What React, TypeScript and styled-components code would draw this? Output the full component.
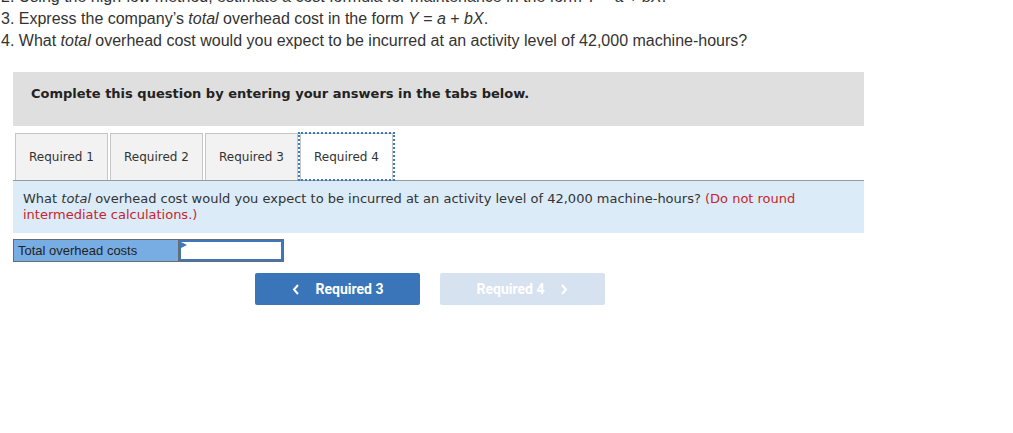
import React from "react";
import styled, { createGlobalStyle } from "styled-components";

const GlobalStyle = createGlobalStyle`
  html, body {
    margin: 0;
    padding: 0;
    background: #fff;
    overflow: hidden;
  }
`;

const Page = styled.div`
  width: 1013px;
  height: 433px;
  overflow: hidden;
  color: #333;
`;

const Intro = styled.div`
  margin-top: -14px;
  padding-left: 1px;
  font-family: "Liberation Sans", Arial, sans-serif;
  font-size: 16px;
  line-height: 22px;
  color: #333;
  p {
    margin: 0;
    white-space: nowrap;
  }
`;

const Main = styled.div`
  margin: 20px 0 0 13px;
  width: 851px;
  display: flex;
  flex-direction: column;
`;

const Banner = styled.div`
  height: 54px;
  box-sizing: border-box;
  background: #dfdfdf;
  padding: 14px 0 0 18px;
  font-family: "DejaVu Sans", Verdana, sans-serif;
  font-weight: bold;
  font-size: 13px;
  line-height: 16px;
  color: #222;
`;

const TabBar = styled.div`
  margin-top: 7px;
  display: flex;
  gap: 2px;
  padding-left: 2px;
  border-bottom: 1px solid #9a9a9a;
`;

const Tab = styled.div<{ $active?: boolean }>`
  position: relative;
  width: 93px;
  height: 47px;
  box-sizing: border-box;
  border: 1px solid #c6c6c6;
  border-bottom: none;
  background: ${(p) => (p.$active ? "#fff" : "#f2f2f2")};
  display: flex;
  align-items: center;
  justify-content: center;
  font-family: "DejaVu Sans", Verdana, sans-serif;
  font-size: 12px;
  color: #333;
  ${(p) =>
    p.$active &&
    `
    &::after {
      content: "";
      position: absolute;
      left: -3px;
      right: -3px;
      top: -2px;
      bottom: -1px;
      border: 2px dotted #3a78c2;
    }
  `}
`;

const Prompt = styled.div`
  background: #dbebf8;
  padding: 10px 60px 10px 10px;
  font-family: "DejaVu Sans", Verdana, sans-serif;
  font-size: 13px;
  line-height: 16px;
  color: #333;
  em {
    font-style: italic;
  }
`;

const Note = styled.span`
  color: #c6262e;
`;

const AnswerRow = styled.div`
  margin-top: 6px;
  display: flex;
  height: 23px;
`;

const Label = styled.div`
  width: 165px;
  box-sizing: border-box;
  border: 1px solid #6b6b6b;
  border-right: none;
  background: #78ade3;
  display: flex;
  align-items: center;
  padding-left: 4px;
  font-family: "Liberation Sans", Arial, sans-serif;
  font-size: 13px;
  color: #222;
`;

const InputCell = styled.div`
  position: relative;
  width: 106px;
  box-sizing: border-box;
  border: 1px solid #6b6b6b;
  padding: 0;
  display: flex;
`;

const Input = styled.input`
  flex: 1;
  margin: 0;
  border: 2px solid #3e76b9;
  outline: none;
  background: #fff;
  box-sizing: border-box;
  width: 100%;
  height: 100%;
  padding: 0 4px;
`;

const Marker = styled.span`
  position: absolute;
  left: 2px;
  top: 2px;
  width: 0;
  height: 0;
  border-top: 3px solid transparent;
  border-bottom: 3px solid transparent;
  border-left: 6px solid #3e76b9;
`;

const NavRow = styled.div`
  margin: 11px 0 0 242px;
  display: flex;
  gap: 20px;
`;

const NavButton = styled.button<{ $disabled?: boolean }>`
  width: 165px;
  height: 32px;
  border: none;
  border-radius: 2px;
  background: ${(p) => (p.$disabled ? "#d7e2f0" : "#3a75b9")};
  color: #fff;
  font-family: Roboto, "Liberation Sans", sans-serif;
  font-weight: bold;
  font-size: 14px;
  display: flex;
  align-items: center;
  justify-content: center;
  gap: 16px;
  padding: 0;
  cursor: pointer;
`;

const Chevron = ({ dir }: { dir: "left" | "right" }) => (
  <svg width="8" height="11" viewBox="0 0 8 11">
    <path
      d={dir === "left" ? "M6 1 L2 5.5 L6 10" : "M2 1 L6 5.5 L2 10"}
      fill="none"
      stroke="#fff"
      strokeWidth="2"
    />
  </svg>
);

const App: React.FC = () => {
  return (
    <Page>
      <GlobalStyle />
      <Intro>
        <p>
          2. Using the high-low method, estimate a cost formula for maintenance in the form <em>Y</em> = <em>a</em> + <em>bX</em>.
        </p>
        <p>
          3. Express the company’s <em>total</em> overhead cost in the form <em>Y</em> = <em>a</em> + <em>bX</em>.
        </p>
        <p>
          4. What <em>total</em> overhead cost would you expect to be incurred at an activity level of 42,000 machine-hours?
        </p>
      </Intro>
      <Main>
        <Banner>Complete this question by entering your answers in the tabs below.</Banner>
        <TabBar>
          <Tab>Required 1</Tab>
          <Tab>Required 2</Tab>
          <Tab>Required 3</Tab>
          <Tab $active>Required 4</Tab>
        </TabBar>
        <Prompt>
          What <em>total</em> overhead cost would you expect to be incurred at an activity level of 42,000 machine-hours?{" "}
          <Note>(Do not round intermediate calculations.)</Note>
        </Prompt>
        <AnswerRow>
          <Label>Total overhead costs</Label>
          <InputCell>
            <Input />
            <Marker />
          </InputCell>
        </AnswerRow>
        <NavRow>
          <NavButton>
            <Chevron dir="left" />
            Required 3
          </NavButton>
          <NavButton $disabled>
            Required 4
            <Chevron dir="right" />
          </NavButton>
        </NavRow>
      </Main>
    </Page>
  );
};

export default App;
